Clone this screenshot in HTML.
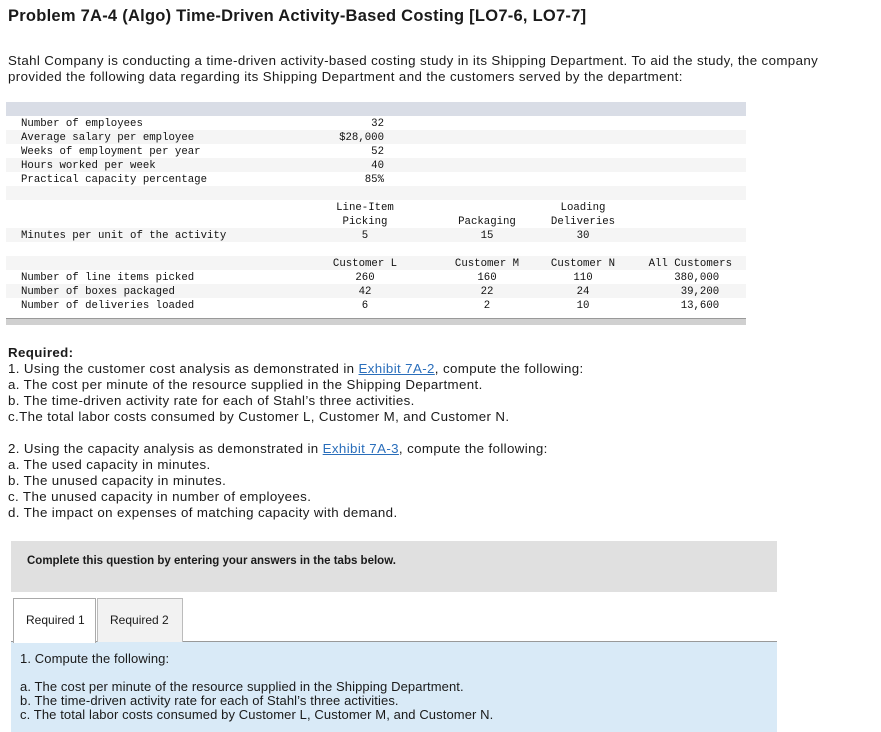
<!DOCTYPE html>
<html><head><meta charset="utf-8"><style>
body{margin:0;width:881px;height:731px;background:#fff;font-family:"Liberation Sans",sans-serif;color:#1a1a1a;position:relative;overflow:hidden}
.a{position:absolute;white-space:nowrap}
.t{font-size:13.3px;line-height:16px;letter-spacing:0.38px}
.m{font-family:"Liberation Mono",monospace;font-size:10.7px;line-height:14px;position:absolute;white-space:nowrap;color:#111}
.r{position:absolute;left:6px;width:740px;height:14px}
a{color:#2a6ebb;text-decoration:underline}
</style></head><body>
<div class="a" style="left:8px;top:7px;font-size:16.5px;font-weight:bold;letter-spacing:0.25px">Problem 7A-4 (Algo) Time-Driven Activity-Based Costing [LO7-6, LO7-7]</div>
<div class="a t" style="left:8px;top:53px">Stahl Company is conducting a time-driven activity-based costing study in its Shipping Department. To aid the study, the company<br>provided the following data regarding its Shipping Department and the customers served by the department:</div>

<div class="r" style="top:102px;background:#d9dde6"></div>
<div class="r" style="top:130px;background:#f5f5f5"></div>
<div class="r" style="top:158px;background:#f5f5f5"></div>
<div class="r" style="top:186px;background:#f5f5f5"></div>
<div class="r" style="top:228px;background:#f5f5f5"></div>
<div class="r" style="top:256px;background:#f5f5f5"></div>
<div class="r" style="top:284px;background:#f5f5f5"></div>
<div class="r" style="top:318px;height:6px;background:#d0d0d0;border-top:1px solid #999"></div>

<div class="m" style="left:21px;top:117px">Number of employees<br>Average salary per employee<br>Weeks of employment per year<br>Hours worked per week<br>Practical capacity percentage</div>
<div class="m" style="left:320px;top:117px;width:64px;text-align:right">32<br>$28,000<br>52<br>40<br>85%</div>

<div class="m" style="left:320px;top:201px;width:90px;text-align:center">Line-Item<br>Picking<br>5</div>
<div class="m" style="left:442px;top:215px;width:90px;text-align:center">Packaging<br>15</div>
<div class="m" style="left:538px;top:201px;width:90px;text-align:center">Loading<br>Deliveries<br>30</div>
<div class="m" style="left:21px;top:229px">Minutes per unit of the activity</div>

<div class="m" style="left:320px;top:257px;width:90px;text-align:center">Customer L<br>260<br>42<br>6</div>
<div class="m" style="left:442px;top:257px;width:90px;text-align:center">Customer M<br>160<br>22<br>2</div>
<div class="m" style="left:538px;top:257px;width:90px;text-align:center">Customer N<br>110<br>24<br>10</div>
<div class="m" style="left:640px;top:257px;width:92px;text-align:right">All Customers<br>380,000&nbsp;&nbsp;<br>39,200&nbsp;&nbsp;<br>13,600&nbsp;&nbsp;</div>
<div class="m" style="left:21px;top:271px">Number of line items picked<br>Number of boxes packaged<br>Number of deliveries loaded</div>

<div class="a t" style="left:8px;top:345px"><b>Required:</b><br>1. Using the customer cost analysis as demonstrated in <a>Exhibit 7A-2</a>, compute the following:<br>a. The cost per minute of the resource supplied in the Shipping Department.<br>b. The time-driven activity rate for each of Stahl’s three activities.<br>c.The total labor costs consumed by Customer L, Customer M, and Customer N.</div>
<div class="a t" style="left:8px;top:441px">2. Using the capacity analysis as demonstrated in <a>Exhibit 7A-3</a>, compute the following:<br>a. The used capacity in minutes.<br>b. The unused capacity in minutes.<br>c. The unused capacity in number of employees.<br>d. The impact on expenses of matching capacity with demand.</div>

<div class="a" style="left:11px;top:541px;width:766px;height:51px;background:#e0e0e0"></div>
<div class="a" style="left:27px;top:555px;font-size:11.5px;font-weight:bold">Complete this question by entering your answers in the tabs below.</div>

<div class="a" style="left:11px;top:641px;width:766px;height:90px;background:#d9eaf7;border-top:1px solid #999"></div>
<div class="a" style="left:13px;top:598px;width:81px;height:44px;background:#fff;border:1px solid #aaa;border-bottom:none"></div>
<div class="a" style="left:26px;top:613px;font-size:12px">Required 1</div>
<div class="a" style="left:97px;top:598px;width:84px;height:43px;background:#f2f2f2;border:1px solid #bbb;border-bottom:none"></div>
<div class="a" style="left:110px;top:613px;font-size:12px">Required 2</div>
<div class="a" style="left:20px;top:652px;font-size:13px;line-height:14px;letter-spacing:0.1px">1. Compute the following:</div>
<div class="a" style="left:20px;top:680px;font-size:13px;line-height:14px;letter-spacing:0.1px">a. The cost per minute of the resource supplied in the Shipping Department.<br>b. The time-driven activity rate for each of Stahl’s three activities.<br>c. The total labor costs consumed by Customer L, Customer M, and Customer N.</div>
</body></html>
